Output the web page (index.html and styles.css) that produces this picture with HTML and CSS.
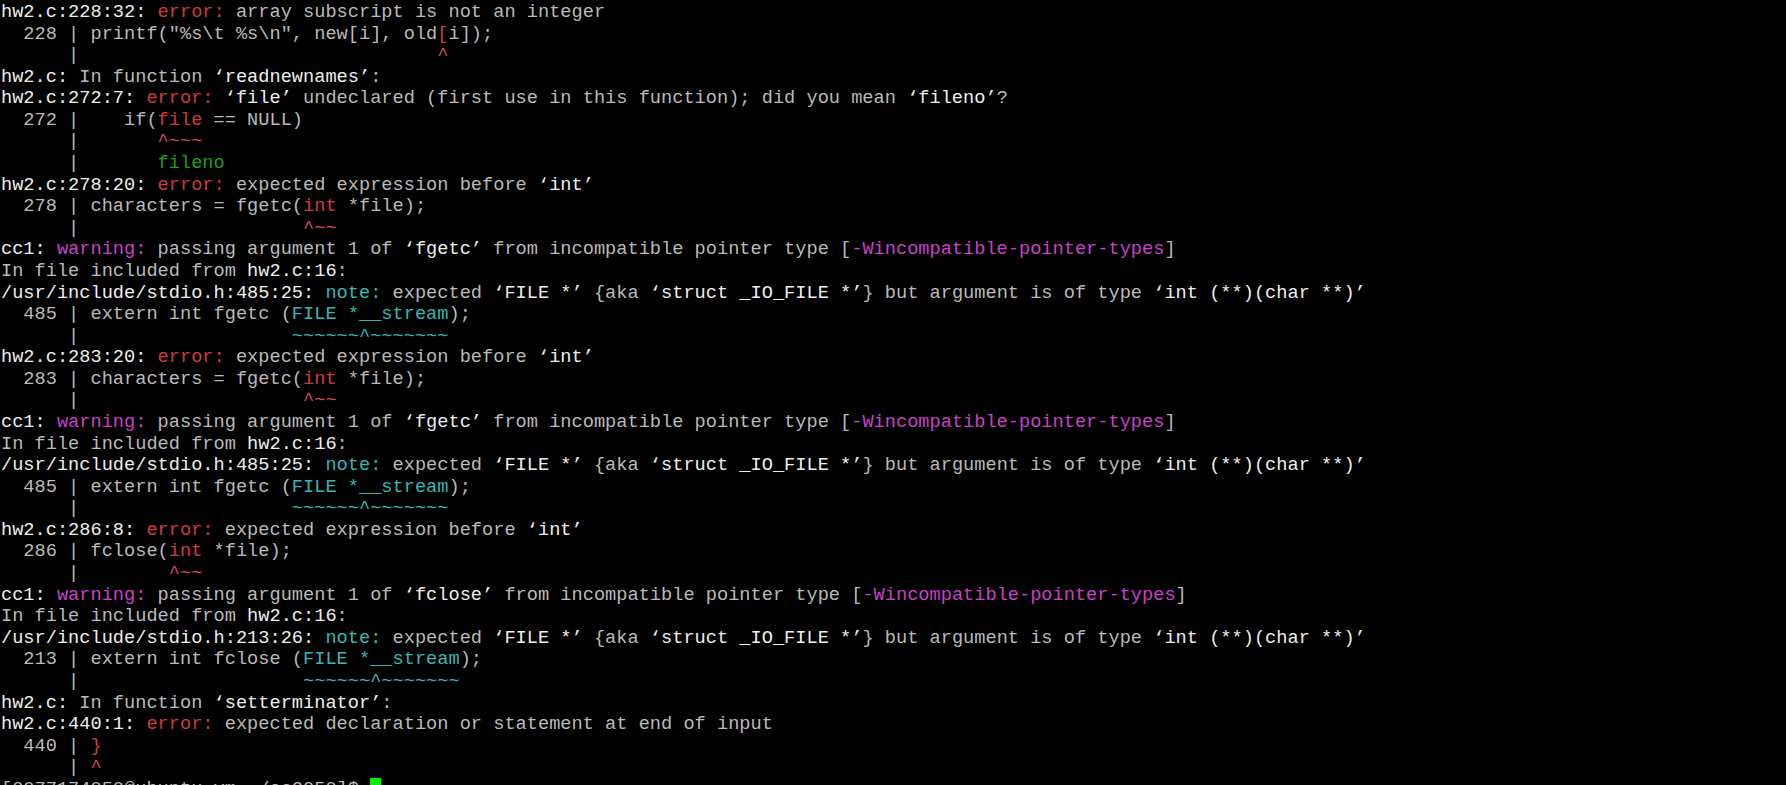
FILE: index.html
```html
<!DOCTYPE html>
<html lang="en">
<head>
<meta charset="utf-8">
<title>Terminal</title>
<link rel="stylesheet" href="styles.css">
</head>
<body>
<div class="term">
<div class="ln"><span class="b">hw2.c:228:32:</span> <span class="r">error:</span> array subscript is not an integer</div>
<div class="ln">  228 | printf("%s\t %s\n", new[i], old<span class="r">[</span>i]);</div>
<div class="ln">      |                                <span class="rt">^</span></div>
<div class="ln"><span class="b">hw2.c:</span> In function <span class="b">‘readnewnames’</span>:</div>
<div class="ln"><span class="b">hw2.c:272:7:</span> <span class="r">error:</span> <span class="b">‘file’</span> undeclared (first use in this function); did you mean <span class="b">‘fileno’</span>?</div>
<div class="ln">  272 |    if(<span class="r">file</span> == NULL)</div>
<div class="ln">      |       <span class="rt">^~~~</span></div>
<div class="ln">      |       <span class="g">fileno</span></div>
<div class="ln"><span class="b">hw2.c:278:20:</span> <span class="r">error:</span> expected expression before <span class="b">‘int’</span></div>
<div class="ln">  278 | characters = fgetc(<span class="r">int</span> *file);</div>
<div class="ln">      |                    <span class="rt">^~~</span></div>
<div class="ln"><span class="b">cc1:</span> <span class="m">warning:</span> passing argument 1 of <span class="b">‘fgetc’</span> from incompatible pointer type [<span class="m">-Wincompatible-pointer-types</span>]</div>
<div class="ln">In file included from <span class="b">hw2.c:16</span>:</div>
<div class="ln"><span class="b">/usr/include/stdio.h:485:25:</span> <span class="c">note:</span> expected <span class="b">‘FILE *’</span> {aka <span class="b">‘struct _IO_FILE *’</span>} but argument is of type <span class="b">‘int (**)(char **)’</span></div>
<div class="ln">  485 | extern int fgetc (<span class="c">FILE *__stream</span>);</div>
<div class="ln">      |                   <span class="c">~~~~~~^~~~~~~~</span></div>
<div class="ln"><span class="b">hw2.c:283:20:</span> <span class="r">error:</span> expected expression before <span class="b">‘int’</span></div>
<div class="ln">  283 | characters = fgetc(<span class="r">int</span> *file);</div>
<div class="ln">      |                    <span class="rt">^~~</span></div>
<div class="ln"><span class="b">cc1:</span> <span class="m">warning:</span> passing argument 1 of <span class="b">‘fgetc’</span> from incompatible pointer type [<span class="m">-Wincompatible-pointer-types</span>]</div>
<div class="ln">In file included from <span class="b">hw2.c:16</span>:</div>
<div class="ln"><span class="b">/usr/include/stdio.h:485:25:</span> <span class="c">note:</span> expected <span class="b">‘FILE *’</span> {aka <span class="b">‘struct _IO_FILE *’</span>} but argument is of type <span class="b">‘int (**)(char **)’</span></div>
<div class="ln">  485 | extern int fgetc (<span class="c">FILE *__stream</span>);</div>
<div class="ln">      |                   <span class="c">~~~~~~^~~~~~~~</span></div>
<div class="ln"><span class="b">hw2.c:286:8:</span> <span class="r">error:</span> expected expression before <span class="b">‘int’</span></div>
<div class="ln">  286 | fclose(<span class="r">int</span> *file);</div>
<div class="ln">      |        <span class="rt">^~~</span></div>
<div class="ln"><span class="b">cc1:</span> <span class="m">warning:</span> passing argument 1 of <span class="b">‘fclose’</span> from incompatible pointer type [<span class="m">-Wincompatible-pointer-types</span>]</div>
<div class="ln">In file included from <span class="b">hw2.c:16</span>:</div>
<div class="ln"><span class="b">/usr/include/stdio.h:213:26:</span> <span class="c">note:</span> expected <span class="b">‘FILE *’</span> {aka <span class="b">‘struct _IO_FILE *’</span>} but argument is of type <span class="b">‘int (**)(char **)’</span></div>
<div class="ln">  213 | extern int fclose (<span class="c">FILE *__stream</span>);</div>
<div class="ln">      |                    <span class="c">~~~~~~^~~~~~~~</span></div>
<div class="ln"><span class="b">hw2.c:</span> In function <span class="b">‘setterminator’</span>:</div>
<div class="ln"><span class="b">hw2.c:440:1:</span> <span class="r">error:</span> expected declaration or statement at end of input</div>
<div class="ln">  440 | <span class="r">}</span></div>
<div class="ln">      | <span class="rt">^</span></div>
<div class="ln">[0077174050@ubuntu-vm ~/cs2050]$ <span class="cursor"> </span></div>
</div>
</body>
</html>
```

FILE: styles.css
```css
html, body {
  margin: 0;
  padding: 0;
  background: #000000;
  overflow: hidden;
  height: 100%;
}

.term {
  padding: 2px 0 0 1px;
  font-family: "Liberation Mono", "Courier New", monospace;
  font-size: 18.65px;
  line-height: 21.59px;
  color: #bababa;
}

.ln {
  white-space: pre;
  height: 21.59px;
}

.b { color: #eeeeee; }
.r { color: #cf3b3b; }
.rt { color: #d9475a; }
.m { color: #c940c9; }
.c { color: #37b6b6; }
.g { color: #1f9f1f; }

.cursor {
  background: #00ee00;
}
```
